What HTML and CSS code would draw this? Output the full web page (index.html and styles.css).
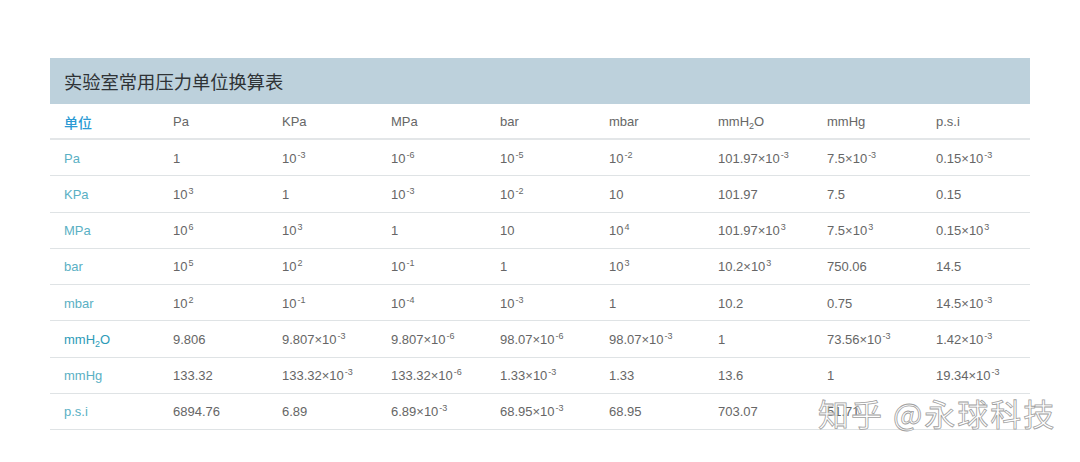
FILE: index.html
```html
<!DOCTYPE html>
<html lang="zh">
<head>
<meta charset="utf-8">
<link rel="stylesheet" href="styles.css">
</head>
<body>
<div class="page">
  <div class="table">
    <div class="title">实验室常用压力单位换算表</div>
    <div class="row head">
      <div class="c lab hd">单位</div><div class="c">Pa</div><div class="c">KPa</div><div class="c">MPa</div><div class="c">bar</div><div class="c">mbar</div><div class="c">mmH<sub>2</sub>O</div><div class="c">mmHg</div><div class="c">p.s.i</div>
    </div>
    <div class="row">
      <div class="c lab">Pa</div><div class="c">1</div><div class="c">10<sup>-3</sup></div><div class="c">10<sup>-6</sup></div><div class="c">10<sup>-5</sup></div><div class="c">10<sup>-2</sup></div><div class="c">101.97×10<sup>-3</sup></div><div class="c">7.5×10<sup>-3</sup></div><div class="c">0.15×10<sup>-3</sup></div>
    </div>
    <div class="row">
      <div class="c lab">KPa</div><div class="c">10<sup>3</sup></div><div class="c">1</div><div class="c">10<sup>-3</sup></div><div class="c">10<sup>-2</sup></div><div class="c">10</div><div class="c">101.97</div><div class="c">7.5</div><div class="c">0.15</div>
    </div>
    <div class="row">
      <div class="c lab">MPa</div><div class="c">10<sup>6</sup></div><div class="c">10<sup>3</sup></div><div class="c">1</div><div class="c">10</div><div class="c">10<sup>4</sup></div><div class="c">101.97×10<sup>3</sup></div><div class="c">7.5×10<sup>3</sup></div><div class="c">0.15×10<sup>3</sup></div>
    </div>
    <div class="row">
      <div class="c lab">bar</div><div class="c">10<sup>5</sup></div><div class="c">10<sup>2</sup></div><div class="c">10<sup>-1</sup></div><div class="c">1</div><div class="c">10<sup>3</sup></div><div class="c">10.2×10<sup>3</sup></div><div class="c">750.06</div><div class="c">14.5</div>
    </div>
    <div class="row">
      <div class="c lab">mbar</div><div class="c">10<sup>2</sup></div><div class="c">10<sup>-1</sup></div><div class="c">10<sup>-4</sup></div><div class="c">10<sup>-3</sup></div><div class="c">1</div><div class="c">10.2</div><div class="c">0.75</div><div class="c">14.5×10<sup>-3</sup></div>
    </div>
    <div class="row">
      <div class="c lab dark">mmH<sub>2</sub>O</div><div class="c">9.806</div><div class="c">9.807×10<sup>-3</sup></div><div class="c">9.807×10<sup>-6</sup></div><div class="c">98.07×10<sup>-6</sup></div><div class="c">98.07×10<sup>-3</sup></div><div class="c">1</div><div class="c">73.56×10<sup>-3</sup></div><div class="c">1.42×10<sup>-3</sup></div>
    </div>
    <div class="row">
      <div class="c lab">mmHg</div><div class="c">133.32</div><div class="c">133.32×10<sup>-3</sup></div><div class="c">133.32×10<sup>-6</sup></div><div class="c">1.33×10<sup>-3</sup></div><div class="c">1.33</div><div class="c">13.6</div><div class="c">1</div><div class="c">19.34×10<sup>-3</sup></div>
    </div>
    <div class="row">
      <div class="c lab">p.s.i</div><div class="c">6894.76</div><div class="c">6.89</div><div class="c">6.89×10<sup>-3</sup></div><div class="c">68.95×10<sup>-3</sup></div><div class="c">68.95</div><div class="c">703.07</div><div class="c">51.71</div><div class="c"></div>
    </div>
  </div>
  <div class="watermark">知乎 @永球科技</div>
</div>
</body>
</html>
```
FILE: styles.css
```css
html, body {
  margin: 0;
  padding: 0;
  background: #ffffff;
}
.page {
  position: relative;
  width: 1080px;
  height: 462px;
  padding: 58px 0 0 50px;
  box-sizing: border-box;
  font-family: "Liberation Sans", Arial, "Noto Sans CJK SC", sans-serif;
}
.table {
  width: 980px;
}
.title {
  height: 46px;
  background: #bdd1dc;
  color: #2f3336;
  font-family: "Noto Sans CJK SC", sans-serif;
  font-size: 18.3px;
  line-height: 46px;
  padding-left: 14px;
}
.row {
  display: grid;
  grid-template-columns: repeat(8, 109px) 1fr;
  padding-left: 14px;
  height: 36.25px;
  box-sizing: border-box;
  border-bottom: 1px solid #dfe3e5;
  align-items: center;
}
.row.head {
  height: 36px;
  border-bottom: 2px solid #e3e6e8;
}
.c {
  font-size: 13px;
  color: #666666;
  white-space: nowrap;
  padding-top: 1px;
}
.c.lab {
  color: #5ab0c4;
}
.c.lab.dark {
  color: #2d9bb8;
}
.c.hd {
  color: #2a9ad4;
  font-family: "Noto Sans CJK SC", sans-serif;
  font-size: 14px;
  font-weight: 500;
}
sup {
  font-size: 9px;
  vertical-align: 5px;
  line-height: 0;
  margin-left: 1px;
}
sub {
  font-size: 9px;
  vertical-align: -3px;
  line-height: 0;
}
.watermark {
  position: absolute;
  left: 818px;
  top: 394px;
  font-family: "Noto Sans CJK SC", sans-serif;
  font-size: 31px;
  line-height: 38px;
  color: rgba(255, 255, 255, 0.92);
  -webkit-text-stroke: 0.8px #a0a0a0;
  letter-spacing: 2px;
}
```
